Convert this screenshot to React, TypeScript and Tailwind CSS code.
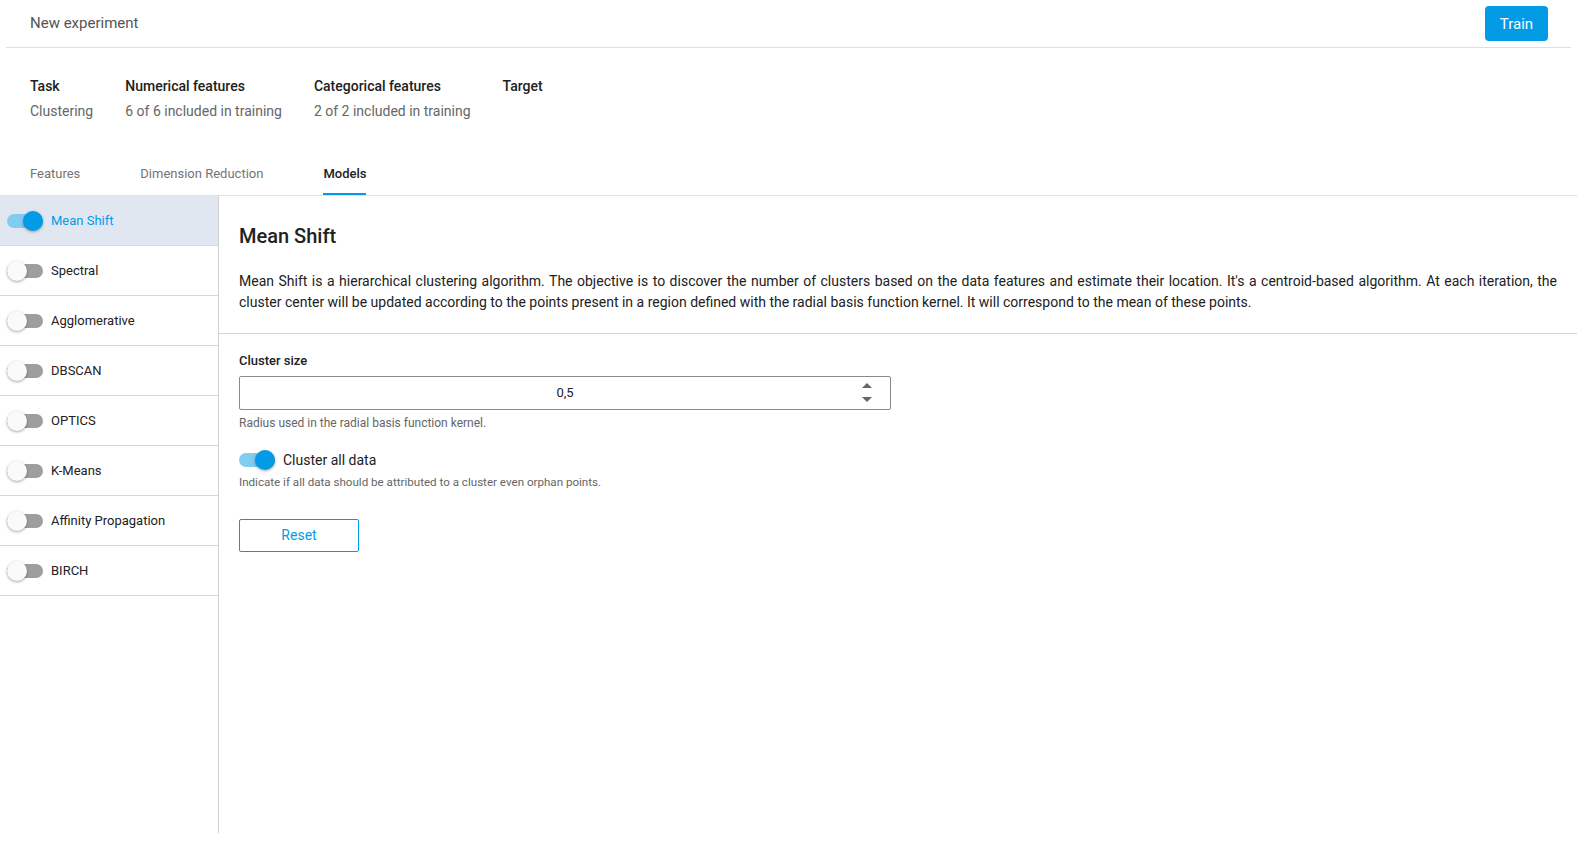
import { useState } from "react";

const models = [
  "Mean Shift",
  "Spectral",
  "Agglomerative",
  "DBSCAN",
  "OPTICS",
  "K-Means",
  "Affinity Propagation",
  "BIRCH",
];

function Toggle({ on }: { on: boolean }) {
  return (
    <div className="relative w-[36px] h-[20px] shrink-0">
      <div
        className={`absolute left-0 right-0 top-[3px] h-[14px] rounded-full ${on ? "bg-[#81cdf2]" : "bg-[#9e9e9e]"}`}
      />
      <div
        className={`absolute top-0 w-[20px] h-[20px] rounded-full shadow-[0_1px_3px_rgba(0,0,0,0.35)] ${on ? "left-[16px] bg-[#039be5]" : "left-0 bg-[#fafafa]"}`}
      />
    </div>
  );
}

export default function App() {
  const [active] = useState("Mean Shift");

  return (
    <div className="h-[843px] bg-white font-['Roboto',sans-serif] text-[#212121] flex flex-col">
      {/* header */}
      <div className="mx-[6px] h-[48px] border-b border-[#e0e0e0] flex items-center justify-between pl-[24px] pr-[23px]">
        <span className="text-[15px] text-[#555]">New experiment</span>
        <button className="h-[35px] w-[63px] rounded bg-[#039be5] text-white text-[15px] pt-[2px]">Train</button>
      </div>

      {/* summary */}
      <div className="flex gap-[32px] px-[30px] pt-[28px] pb-[30px]">
        <div className="flex flex-col gap-[4px]">
          <span className="text-[14px] font-medium">Task</span>
          <span className="text-[14px] text-[#666]">Clustering</span>
        </div>
        <div className="flex flex-col gap-[4px]">
          <span className="text-[14px] font-medium">Numerical features</span>
          <span className="text-[14px] text-[#666]">6 of 6 included in training</span>
        </div>
        <div className="flex flex-col gap-[4px]">
          <span className="text-[14px] font-medium">Categorical features</span>
          <span className="text-[14px] text-[#666]">2 of 2 included in training</span>
        </div>
        <div className="flex flex-col gap-[4px]">
          <span className="text-[14px] font-medium">Target</span>
        </div>
      </div>

      {/* tabs */}
      <div className="flex border-b border-[#e0e0e0] h-[44px] text-[13px]">
        <div className="pl-[30px] pr-[30px] flex items-center text-[#757575]">Features</div>
        <div className="px-[30px] flex items-center text-[#757575]">Dimension Reduction</div>
        <div className="ml-[30px] flex items-center text-[#212121] font-medium border-b-2 border-[#039be5] pt-[2px]">Models</div>
      </div>

      <div className="flex flex-1 pb-[10px]">
        {/* sidebar */}
        <div className="w-[219px] shrink-0 border-r border-[#d0d0d0]">
          {models.map((m) => (
            <div
              key={m}
              className={`h-[50px] border-b border-[#d6d6d6] flex items-center gap-[8px] pl-[7px] text-[13px] ${m === active ? "bg-[#e1e7f0] text-[#039be5]" : ""}`}
            >
              <Toggle on={m === active} />
              <span>{m}</span>
            </div>
          ))}
        </div>

        {/* content */}
        <div className="flex-1">
          <div className="pl-[20px] pr-[20px] pt-[28px] pb-[20px] border-b border-[#d6d6d6]">
            <h2 className="text-[20px] font-medium leading-[24px]">Mean Shift</h2>
            <p className="mt-[23px] text-[14px] leading-[21px] text-justify">
              Mean Shift is a hierarchical clustering algorithm. The objective is to discover the number of clusters based on the data features and estimate their location. It's a centroid-based algorithm. At each iteration, the cluster center will be updated according to the points present in a region defined with the radial basis function kernel. It will correspond to the mean of these points.
            </p>
          </div>

          <div className="pl-[20px] pt-[17px]">
            <div className="text-[13px] font-medium">Cluster size</div>
            <div className="mt-[5px] w-[652px] h-[34px] border border-[#8a8a8a] rounded-[2px] flex items-center relative">
              <span className="flex-1 text-center text-[13px]">0,5</span>
              <div className="absolute right-[18px] top-[6px] flex flex-col gap-[9px]">
                <div className="w-0 h-0 border-l-[5px] border-r-[5px] border-b-[5px] border-l-transparent border-r-transparent border-b-[#666]" />
                <div className="w-0 h-0 border-l-[5px] border-r-[5px] border-t-[5px] border-l-transparent border-r-transparent border-t-[#666]" />
              </div>
            </div>
            <div className="mt-[4px] text-[12px] text-[#666]">Radius used in the radial basis function kernel.</div>

            <div className="mt-[18px] flex items-center gap-[8px]">
              <Toggle on />
              <span className="text-[14px]">Cluster all data</span>
            </div>
            <div className="mt-[3px] text-[11.6px] text-[#666]">Indicate if all data should be attributed to a cluster even orphan points.</div>

            <button className="mt-[28px] w-[120px] h-[33px] border border-[#039be5] rounded-[2px] text-[#039be5] text-[14px]">
              Reset
            </button>
          </div>
        </div>
      </div>
    </div>
  );
}
